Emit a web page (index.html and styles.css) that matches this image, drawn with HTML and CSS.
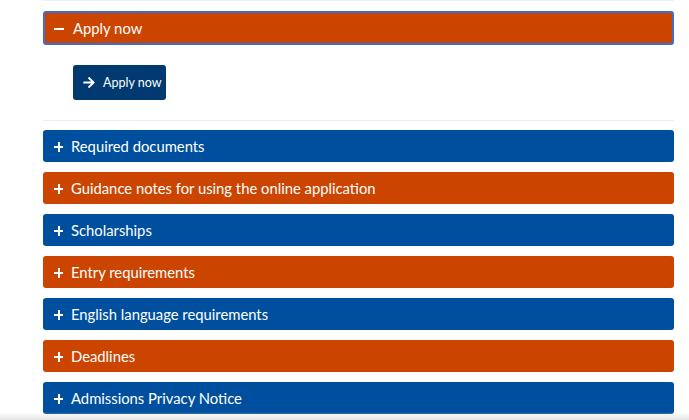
FILE: index.html
```html
<!DOCTYPE html>
<html>
<head>
<meta charset="utf-8">
<link rel="stylesheet" href="styles.css">
</head>
<body>
<div class="page">
  <div class="accordion">
    <div class="item open">
      <button class="bar orange focused"><span class="sign minus"></span><span class="label">Apply now</span></button>
      <div class="panel">
        <a class="apply-btn" href="#">
          <svg class="arrow" viewBox="0 0 448 512" width="12" height="13"><path fill="#fff" d="M190.5 66.9l22.2-22.2c9.4-9.4 24.6-9.4 33.9 0L441 239c9.4 9.4 9.4 24.6 0 33.9L246.6 467.3c-9.4 9.4-24.6 9.4-33.9 0l-22.2-22.2c-9.5-9.5-9.3-25 .4-34.3L311.4 296H24c-13.3 0-24-10.7-24-24v-32c0-13.3 10.7-24 24-24h287.4L190.9 101.2c-9.8-9.3-10-24.8-.4-34.3z"/></svg>
          <span>Apply now</span>
        </a>
      </div>
    </div>
    <div class="item"><button class="bar blue"><span class="sign plus"></span><span class="label">Required documents</span></button></div>
    <div class="item"><button class="bar orange"><span class="sign plus"></span><span class="label">Guidance notes for using the online application</span></button></div>
    <div class="item"><button class="bar blue"><span class="sign plus"></span><span class="label">Scholarships</span></button></div>
    <div class="item"><button class="bar orange"><span class="sign plus"></span><span class="label">Entry requirements</span></button></div>
    <div class="item"><button class="bar blue"><span class="sign plus"></span><span class="label">English language requirements</span></button></div>
    <div class="item"><button class="bar orange"><span class="sign plus"></span><span class="label">Deadlines</span></button></div>
    <div class="item"><button class="bar blue"><span class="sign plus"></span><span class="label">Admissions Privacy Notice</span></button></div>
  </div>
</div>
<div class="shade"></div>
</body>
</html>
```
FILE: styles.css
```css
html, body {
  margin: 0;
  padding: 0;
  background: #fff;
  height: 420px;
  overflow: hidden;
}
body {
  font-family: Lato, "Liberation Sans", sans-serif;
}
.page {
  padding: 0 15px 0 43px;
  width: 631px;
}
.accordion {
  border-top: 1px solid #f0f0f0;
  padding-top: 10px;
  display: flex;
  flex-direction: column;
  gap: 10px;
}
.bar {
  display: flex;
  align-items: center;
  width: 100%;
  height: 32px;
  border: 0;
  border-radius: 3px;
  padding: 0 0 0 11px;
  margin: 0;
  color: #fff;
  font-family: inherit;
  font-size: 14.8px;
  font-weight: 400;
  text-align: left;
  cursor: pointer;
}
.bar.orange { background: #cb4501; }
.bar.blue { background: #004f9e; }
.bar.focused {
  height: 34px;
  border: 2px solid #3b6fd6;
  padding-left: 9px;
  border-radius: 3px;
}
.sign {
  position: relative;
  width: 9px;
  height: 9px;
  margin-right: 8px;
  flex: none;
}
.sign::before, .sign::after {
  content: "";
  position: absolute;
  background: #fff;
}
.sign::before {
  left: 0; right: 0; top: 4px; height: 2px;
}
.plus::after {
  top: 0; bottom: -1px; left: 4px; width: 2px;
}
.minus::before { left: 0; right: -1px; }
.minus { margin-right: 10px; }
.label { line-height: 1; }
.panel {
  padding: 20px 0 20px 30px;
  border-bottom: 1px solid #eee;
  margin-bottom: -1px;
}
.apply-btn {
  display: inline-flex;
  align-items: center;
  gap: 8px;
  background: #003a70;
  color: #fff;
  text-decoration: none;
  font-size: 12.5px;
  white-space: nowrap;
  height: 35px;
  padding: 0 0 0 10px;
  border-radius: 3px;
  box-sizing: border-box;
  width: 93px;
}
.shade {
  position: fixed;
  left: 0; right: 0; bottom: 0;
  height: 8px;
  background: linear-gradient(to bottom, rgba(230,230,230,0), rgba(225,225,225,0.9));
}
```
